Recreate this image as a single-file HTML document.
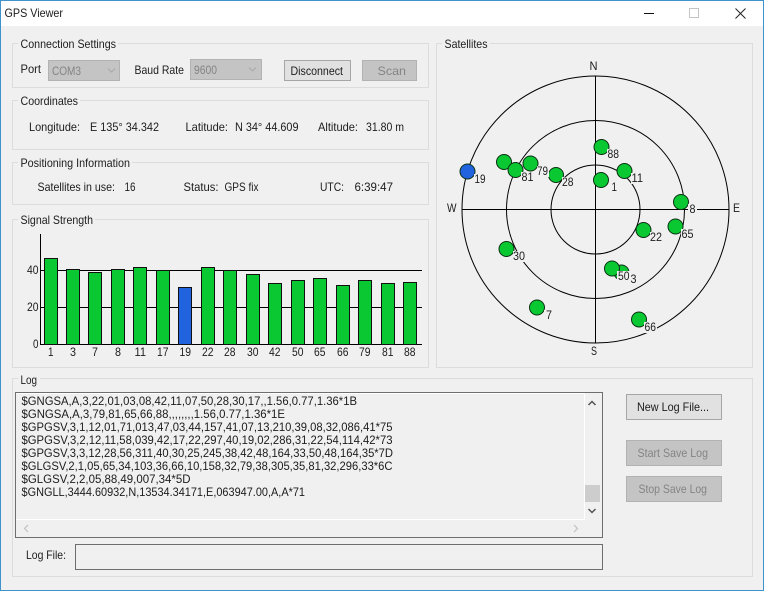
<!DOCTYPE html>
<html lang="en"><head><meta charset="utf-8"><title>GPS Viewer</title>
<style>
html,body{margin:0;padding:0;width:764px;height:591px;overflow:hidden;background:#f0f0f0}
svg{display:block;position:absolute;left:0;top:0}
text{font-family:"Liberation Sans",sans-serif;font-size:12px;fill:#1c1c1c}
.d{fill:#848484}
.g{fill:none;stroke:#dcdcdc}
.b{fill:#f0f0f0}
.ln{stroke:#000;stroke-width:1;fill:none}
.bar{fill:#09c832;stroke:#111}
.dot{fill:#09c832;stroke:#0a2f12;stroke-width:1}
.off{fill:#c4c4c4;stroke:#b2b2b2}
.on{fill:#e1e1e1;stroke:#a6a6a6}
.chev{fill:none;stroke:#a8a8a8;stroke-width:1}
.sb{fill:none;stroke:#555;stroke-width:1.5}
.sbo{fill:none;stroke:#c0c0c0;stroke-width:1.2}
</style></head><body>
<svg width="764" height="591" viewBox="0 0 764 591" xmlns="http://www.w3.org/2000/svg">
<rect width="764" height="591" fill="#f0f0f0"/>
<rect x="0" y="0" width="764" height="26" fill="#fff"/>
<rect x=".5" y=".5" width="763" height="590" fill="none" stroke="#3f92cb"/>
<text x="4.5" y="17" textLength="58.5" lengthAdjust="spacingAndGlyphs">GPS Viewer</text>
<path d="M644 13.5h10" stroke="#111" fill="none"/>
<rect x="689.5" y="8.5" width="9" height="9" fill="none" stroke="#c4c4c4"/>
<path d="M735.5 8.5l10 10M745.5 8.5l-10 10" stroke="#222" fill="none"/>

<!-- groups -->
<rect class="g" x="12.5" y="43.5" width="416" height="44"/>
<rect class="g" x="12.5" y="100.5" width="416" height="49"/>
<rect class="g" x="12.5" y="162.5" width="416" height="42"/>
<rect class="g" x="12.5" y="219.5" width="416" height="148"/>
<rect class="g" x="436.5" y="43.5" width="316" height="324"/>
<rect class="g" x="12.5" y="378.5" width="740" height="198"/>
<rect class="b" x="18" y="40" width="100" height="8"/>
<rect class="b" x="18" y="97" width="62" height="8"/>
<rect class="b" x="18" y="159" width="114" height="8"/>
<rect class="b" x="18" y="216" width="77" height="8"/>
<rect class="b" x="442" y="40" width="48" height="8"/>
<rect class="b" x="18" y="375" width="22" height="8"/>
<text x="20.5" y="48" textLength="95.5" lengthAdjust="spacingAndGlyphs">Connection Settings</text>
<text x="20.5" y="105" textLength="57.5" lengthAdjust="spacingAndGlyphs">Coordinates</text>
<text x="20.5" y="167" textLength="109.5" lengthAdjust="spacingAndGlyphs">Positioning Information</text>
<text x="20.5" y="224" textLength="72.5" lengthAdjust="spacingAndGlyphs">Signal Strength</text>
<text x="444.5" y="48" textLength="43" lengthAdjust="spacingAndGlyphs">Satellites</text>
<text x="20.5" y="384" textLength="16.5" lengthAdjust="spacingAndGlyphs">Log</text>

<!-- connection -->
<text x="20.5" y="73" textLength="20.5" lengthAdjust="spacingAndGlyphs">Port</text>
<rect class="off" x="48.5" y="60.5" width="71" height="20"/>
<text class="d" x="52" y="75" textLength="29" lengthAdjust="spacingAndGlyphs">COM3</text>
<path class="chev" d="M108 68.5l3.5 3.5 3.5-3.5"/>
<text x="134.5" y="74" textLength="49.5" lengthAdjust="spacingAndGlyphs">Baud Rate</text>
<rect class="off" x="190.5" y="59.5" width="71" height="20"/>
<text class="d" x="194" y="74" textLength="23" lengthAdjust="spacingAndGlyphs">9600</text>
<path class="chev" d="M249 67.5l3.5 3.5 3.5-3.5"/>
<rect class="on" x="284.5" y="60.5" width="66" height="20"/>
<text x="290.5" y="75" textLength="52.5" lengthAdjust="spacingAndGlyphs">Disconnect</text>
<rect class="off" x="362.5" y="60.5" width="54" height="20"/>
<text class="d" x="377.5" y="75" textLength="28.5" lengthAdjust="spacingAndGlyphs">Scan</text>

<!-- coordinates -->
<text x="29" y="131" textLength="51" lengthAdjust="spacingAndGlyphs">Longitude:</text>
<text x="90" y="131" textLength="69" lengthAdjust="spacingAndGlyphs">E 135° 34.342</text>
<text x="185.5" y="131" textLength="42.5" lengthAdjust="spacingAndGlyphs">Latitude:</text>
<text x="235" y="131" textLength="63.5" lengthAdjust="spacingAndGlyphs">N 34° 44.609</text>
<text x="318" y="131" textLength="40" lengthAdjust="spacingAndGlyphs">Altitude:</text>
<text x="366" y="131" textLength="38" lengthAdjust="spacingAndGlyphs">31.80 m</text>

<!-- positioning -->
<text x="37.5" y="191" textLength="77.5" lengthAdjust="spacingAndGlyphs">Satellites in use:</text>
<text x="124.5" y="191" textLength="11" lengthAdjust="spacingAndGlyphs">16</text>
<text x="183.5" y="191" textLength="35" lengthAdjust="spacingAndGlyphs">Status:</text>
<text x="224.5" y="191" textLength="34" lengthAdjust="spacingAndGlyphs">GPS fix</text>
<text x="320" y="191" textLength="24" lengthAdjust="spacingAndGlyphs">UTC:</text>
<text x="354.5" y="191" textLength="38.5" lengthAdjust="spacingAndGlyphs">6:39:47</text>

<!-- chart -->
<path class="ln" d="M40.5 234V344.5H422M40.5 270.5H422M40.5 307.5H422"/>
<text x="27" y="274" textLength="11.5" lengthAdjust="spacingAndGlyphs">40</text>
<text x="27" y="311" textLength="11.5" lengthAdjust="spacingAndGlyphs">20</text>
<text x="33" y="348" textLength="5.5" lengthAdjust="spacingAndGlyphs">0</text>
<rect class="bar" x="44.5" y="258.5" width="13" height="86"/>
<rect class="bar" x="66.5" y="269.5" width="13" height="75"/>
<rect class="bar" x="88.5" y="272.5" width="13" height="72"/>
<rect class="bar" x="111.5" y="269.5" width="13" height="75"/>
<rect class="bar" x="133.5" y="267.5" width="13" height="77"/>
<rect class="bar" x="156.5" y="270.5" width="13" height="74"/>
<rect class="bar" style="fill:#2163de" x="178.5" y="287.5" width="13" height="57"/>
<rect class="bar" x="201.5" y="267.5" width="13" height="77"/>
<rect class="bar" x="223.5" y="270.5" width="13" height="74"/>
<rect class="bar" x="246.5" y="274.5" width="13" height="70"/>
<rect class="bar" x="268.5" y="283.5" width="13" height="61"/>
<rect class="bar" x="291.5" y="280.5" width="13" height="64"/>
<rect class="bar" x="313.5" y="278.5" width="13" height="66"/>
<rect class="bar" x="336.5" y="285.5" width="13" height="59"/>
<rect class="bar" x="358.5" y="280.5" width="13" height="64"/>
<rect class="bar" x="381.5" y="283.5" width="13" height="61"/>
<rect class="bar" x="403.5" y="282.5" width="13" height="62"/>
<g>
<text x="48" y="356" textLength="5.5" lengthAdjust="spacingAndGlyphs">1</text>
<text x="70" y="356" textLength="6" lengthAdjust="spacingAndGlyphs">3</text>
<text x="92" y="356" textLength="6" lengthAdjust="spacingAndGlyphs">7</text>
<text x="115" y="356" textLength="6" lengthAdjust="spacingAndGlyphs">8</text>
<text x="134.5" y="356" textLength="11.5" lengthAdjust="spacingAndGlyphs">11</text>
<text x="157" y="356" textLength="11.5" lengthAdjust="spacingAndGlyphs">17</text>
<text x="179.5" y="356" textLength="11.5" lengthAdjust="spacingAndGlyphs">19</text>
<text x="202" y="356" textLength="11.5" lengthAdjust="spacingAndGlyphs">22</text>
<text x="224" y="356" textLength="11.5" lengthAdjust="spacingAndGlyphs">28</text>
<text x="247" y="356" textLength="11.5" lengthAdjust="spacingAndGlyphs">30</text>
<text x="269" y="356" textLength="11.5" lengthAdjust="spacingAndGlyphs">42</text>
<text x="292" y="356" textLength="11.5" lengthAdjust="spacingAndGlyphs">50</text>
<text x="314" y="356" textLength="11.5" lengthAdjust="spacingAndGlyphs">65</text>
<text x="337" y="356" textLength="11.5" lengthAdjust="spacingAndGlyphs">66</text>
<text x="359" y="356" textLength="11.5" lengthAdjust="spacingAndGlyphs">79</text>
<text x="382" y="356" textLength="11.5" lengthAdjust="spacingAndGlyphs">81</text>
<text x="404" y="356" textLength="11.5" lengthAdjust="spacingAndGlyphs">88</text>
</g>

<!-- polar -->
<circle class="ln" cx="595.5" cy="209.5" r="133.5"/>
<circle class="ln" cx="595.5" cy="209.5" r="89"/>
<circle class="ln" cx="595.5" cy="209.5" r="44.5"/>
<path class="ln" d="M595.5 76V343M462 209.5H729"/>
<text x="589.5" y="70" textLength="8" lengthAdjust="spacingAndGlyphs">N</text>
<text x="733" y="212" textLength="7" lengthAdjust="spacingAndGlyphs">E</text>
<text x="447" y="212" textLength="9.5" lengthAdjust="spacingAndGlyphs">W</text>
<text x="591" y="355" textLength="6" lengthAdjust="spacingAndGlyphs">S</text>

<circle class="dot" cx="601" cy="180" r="7.5"/><rect class="b" x="610" y="182" width="9" height="11"/><text x="611.5" y="191" textLength="5.5" lengthAdjust="spacingAndGlyphs">1</text>
<circle class="dot" cx="621.5" cy="272.5" r="7.5"/><rect class="b" x="629" y="274" width="9" height="11"/><text x="630.5" y="283" textLength="6" lengthAdjust="spacingAndGlyphs">3</text>
<circle class="dot" cx="537" cy="307.5" r="7.5"/><rect class="b" x="544" y="310" width="10" height="11"/><text x="546" y="319" textLength="6" lengthAdjust="spacingAndGlyphs">7</text>
<circle class="dot" cx="681" cy="202" r="7.5"/><rect class="b" x="688" y="204" width="9" height="11"/><text x="689.5" y="213" textLength="6" lengthAdjust="spacingAndGlyphs">8</text>
<circle class="dot" cx="624.5" cy="171" r="7.5"/><rect class="b" x="631" y="173" width="13" height="11"/><text x="631.5" y="182" textLength="11.5" lengthAdjust="spacingAndGlyphs">11</text>
<circle class="dot" cx="467.5" cy="171.5" r="7.5" style="fill:#2163de"/><rect class="b" x="474" y="174" width="13" height="11"/><text x="474.5" y="183" textLength="11" lengthAdjust="spacingAndGlyphs">19</text>
<circle class="dot" cx="643.5" cy="230" r="7.5"/><rect class="b" x="650" y="232" width="14" height="11"/><text x="650" y="241" textLength="12" lengthAdjust="spacingAndGlyphs">22</text>
<circle class="dot" cx="556" cy="175" r="7.5"/><rect class="b" x="562" y="177" width="13" height="11"/><text x="562" y="186" textLength="11.5" lengthAdjust="spacingAndGlyphs">28</text>
<circle class="dot" cx="506.5" cy="249" r="7.5"/><rect class="b" x="513" y="251" width="14" height="11"/><text x="513" y="260" textLength="12" lengthAdjust="spacingAndGlyphs">30</text>
<circle class="dot" cx="504" cy="162" r="7.5"/>
<circle class="dot" cx="612" cy="268.5" r="7.5"/><rect class="b" x="617" y="271" width="13" height="11"/><text x="618" y="280" textLength="11.5" lengthAdjust="spacingAndGlyphs">50</text>
<circle class="dot" cx="675.5" cy="226.5" r="7.5"/><rect class="b" x="681" y="229" width="14" height="11"/><text x="681.5" y="238" textLength="12" lengthAdjust="spacingAndGlyphs">65</text>
<circle class="dot" cx="639" cy="319.5" r="7.5"/><rect class="b" x="644" y="322" width="13" height="11"/><text x="644.5" y="331" textLength="11.5" lengthAdjust="spacingAndGlyphs">66</text>
<circle class="dot" cx="530.5" cy="163.5" r="7.5"/><rect class="b" x="537" y="166" width="12" height="11"/><text x="537" y="175" textLength="11" lengthAdjust="spacingAndGlyphs">79</text>
<circle class="dot" cx="515.5" cy="170" r="7.5"/><rect class="b" x="521" y="172" width="14" height="11"/><text x="521.5" y="181" textLength="12" lengthAdjust="spacingAndGlyphs">81</text>
<circle class="dot" cx="601.5" cy="147" r="7.5"/><rect class="b" x="607" y="149" width="13" height="11"/><text x="607.5" y="158" textLength="11.5" lengthAdjust="spacingAndGlyphs">88</text>

<!-- log -->
<rect x="15.5" y="392.5" width="587" height="145" fill="#f0f0f0" stroke="#6e6e6e"/>
<path d="M16.5 393.5H584.5V519.5H16.5" fill="none" stroke="#fff"/>
<text x="21.5" y="405" textLength="335.5" lengthAdjust="spacingAndGlyphs">$GNGSA,A,3,22,01,03,08,42,11,07,50,28,30,17,,1.56,0.77,1.36*1B</text>
<text x="21.5" y="418" textLength="263.5" lengthAdjust="spacingAndGlyphs">$GNGSA,A,3,79,81,65,66,88,,,,,,,,1.56,0.77,1.36*1E</text>
<text x="21.5" y="431" textLength="371" lengthAdjust="spacingAndGlyphs">$GPGSV,3,1,12,01,71,013,47,03,44,157,41,07,13,210,39,08,32,086,41*75</text>
<text x="21.5" y="444" textLength="371" lengthAdjust="spacingAndGlyphs">$GPGSV,3,2,12,11,58,039,42,17,22,297,40,19,02,286,31,22,54,114,42*73</text>
<text x="21.5" y="457" textLength="371.5" lengthAdjust="spacingAndGlyphs">$GPGSV,3,3,12,28,56,311,40,30,25,245,38,42,48,164,33,50,48,164,35*7D</text>
<text x="21.5" y="470" textLength="371" lengthAdjust="spacingAndGlyphs">$GLGSV,2,1,05,65,34,103,36,66,10,158,32,79,38,305,35,81,32,296,33*6C</text>
<text x="21.5" y="483" textLength="169" lengthAdjust="spacingAndGlyphs">$GLGSV,2,2,05,88,49,007,34*5D</text>
<text x="21.5" y="496" textLength="283.5" lengthAdjust="spacingAndGlyphs">$GNGLL,3444.60932,N,13534.34171,E,063947.00,A,A*71</text>
<rect x="585" y="485" width="15" height="17" fill="#cdcdcd"/>
<path class="sb" d="M588.5 405l3.5-3.5 3.5 3.5"/>
<path class="sb" d="M588.5 509l3.5 3.5 3.5-3.5"/>
<path class="sbo" d="M28 525l-3.5 3.5 3.5 3.5"/>
<path class="sbo" d="M574 525l3.5 3.5-3.5 3.5"/>
<text x="26" y="559" textLength="40" lengthAdjust="spacingAndGlyphs">Log File:</text>
<rect x="75.5" y="544.5" width="527" height="25" fill="#f0f0f0" stroke="#6e6e6e"/>
<rect class="on" x="626.5" y="394.5" width="95" height="25"/>
<text x="637" y="411" textLength="72" lengthAdjust="spacingAndGlyphs">New Log File...</text>
<rect class="off" x="626.5" y="440.5" width="95" height="25"/>
<text class="d" x="637.5" y="457" textLength="70.5" lengthAdjust="spacingAndGlyphs">Start Save Log</text>
<rect class="off" x="626.5" y="476.5" width="95" height="25"/>
<text class="d" x="638.5" y="493" textLength="68.5" lengthAdjust="spacingAndGlyphs">Stop Save Log</text>
</svg>
</body></html>
